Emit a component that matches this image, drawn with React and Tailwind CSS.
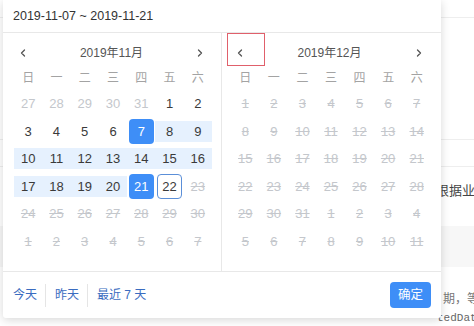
import { ChevronLeft, ChevronRight } from 'lucide-react';

const weekdays = ['日', '一', '二', '三', '四', '五', '六'];

// t: prev | norm | sel | range | today | off
const nov = [
  ...[27, 28, 29, 30, 31].map(d => ({ d, t: 'prev' })),
  { d: 1, t: 'norm' }, { d: 2, t: 'norm' },
  ...[3, 4, 5, 6].map(d => ({ d, t: 'norm' })),
  { d: 7, t: 'sel' },
  ...[8, 9, 10, 11, 12, 13, 14, 15, 16, 17, 18, 19, 20].map(d => ({ d, t: 'range' })),
  { d: 21, t: 'sel' },
  { d: 22, t: 'today' },
  ...[23, 24, 25, 26, 27, 28, 29, 30].map(d => ({ d, t: 'off' })),
  ...[1, 2, 3, 4, 5, 6, 7].map(d => ({ d, t: 'off' })),
];

const dec = [
  ...Array.from({ length: 31 }, (_, i) => ({ d: i + 1, t: 'off' })),
  ...Array.from({ length: 11 }, (_, i) => ({ d: i + 1, t: 'off' })),
];

function Cell({ c }) {
  const base = 'h-[27.5px] flex items-center justify-center';
  if (c.t === 'sel') return (
    <div className={base}>
      <span className="w-[25px] h-[25px] rounded-[4px] bg-[#3e8ef7] text-white flex items-center justify-center">{c.d}</span>
    </div>
  );
  if (c.t === 'range') return (
    <div className={base}>
      <span className="w-full h-[21px] bg-[#e6f1fe] text-[#3a3a3a] flex items-center justify-center">{c.d}</span>
    </div>
  );
  if (c.t === 'today') return (
    <div className={base}>
      <span className="w-[25px] h-[25px] rounded-[4px] border border-[#5b8fd8] text-[#3a3a3a] flex items-center justify-center">{c.d}</span>
    </div>
  );
  if (c.t === 'prev') return <div className={`${base} text-[#c4c7cc]`}>{c.d}</div>;
  if (c.t === 'off') return <div className={`${base} text-[#c4c7cc] line-through`}>{c.d}</div>;
  return <div className={`${base} text-[#3a3a3a]`}>{c.d}</div>;
}

function Panel({ title, days, right }) {
  return (
    <div className={`relative w-[219px] ${right ? 'pl-[9px]' : 'pl-[11px] border-r border-[#e8e8e8]'}`}>
      {right && <div className="absolute left-[5px] top-0 w-[38px] h-[33px] border border-[#e0606b]" />}
      <div className={`${right ? 'w-[200px]' : 'w-[198px]'} flex items-center justify-between h-[26px] mt-[7px]`}>
        <span className="w-[18px] flex justify-center text-[#555]"><ChevronLeft size={12} strokeWidth={2.6} /></span>
        <span className="text-[12px] text-[#555]">{title}</span>
        <span className="w-[18px] mr-[3px] flex justify-center text-[#555]"><ChevronRight size={12} strokeWidth={2.6} /></span>
      </div>
      <div className={`${right ? 'w-[200px]' : 'w-[198px]'} grid grid-cols-7 text-[13px]`}>
        {weekdays.map(w => (
          <div key={w} className="h-[24px] flex items-center justify-center text-[12px] text-[#a3a3a3]">{w}</div>
        ))}
        {days.map((c, i) => <Cell key={i} c={c} />)}
      </div>
    </div>
  );
}

export default function App() {
  return (
    <div className="relative w-[474px] h-[326px] overflow-hidden bg-white font-['Liberation_Sans','Noto_Sans_CJK_SC',sans-serif]">
      {/* page behind the picker */}
      <div className="flex flex-col">
        <div className="h-[18px] border-b border-[#eeeeee]" />
        <div className="h-[122px] border-b border-[#eeeeee]" />
        <div className="h-[27px] border-b border-[#eeeeee]" />
        <div className="h-[48px] flex items-center pl-[436px] text-[13px] text-[#444] whitespace-nowrap">根据业务</div>
        <div className="h-[11px]" />
        <div className="h-[41px] bg-[#f7f7f7]" />
        <div className="h-[20px]" />
        <div className="h-[24px] flex items-center pl-[443px] text-[12px] text-[#777] whitespace-nowrap">期，等</div>
        <div className="h-[14px] flex items-center pl-[437px] font-['Liberation_Mono',monospace] text-[11px] text-[#666] whitespace-nowrap">tedDate</div>
      </div>

      {/* date range picker */}
      <div className="absolute left-[3px] top-0 w-[438px] h-[318px] bg-white flex flex-col shadow-[0_2px_10px_rgba(0,0,0,0.16)] rounded-b-[3px]">
        <div className="h-[33px] shrink-0 border-b border-[#e8e8e8] flex items-center pl-[10px] text-[12.5px] text-[#333]">
          2019-11-07 ~ 2019-11-21
        </div>
        <div className="h-[239px] flex border-b border-[#e8e8e8]">
          <Panel title="2019年11月" days={nov} />
          <Panel title="2019年12月" days={dec} right />
        </div>
        <div className="flex-1 flex items-center justify-between px-[10px]">
          <div className="flex items-center text-[12px] text-[#3a6cc0]">
            <span>今天</span>
            <span className="ml-[8px] pl-[9px] border-l border-[#e5e5e5] h-[23px] flex items-center">昨天</span>
            <span className="ml-[8px] pl-[9px] border-l border-[#e5e5e5] h-[23px] flex items-center">最近 7 天</span>
          </div>
          <button className="w-[41px] h-[26px] rounded-[4px] bg-[#3e8ef7] text-white text-[12.5px] flex items-center justify-center">确定</button>
        </div>
      </div>
    </div>
  );
}
